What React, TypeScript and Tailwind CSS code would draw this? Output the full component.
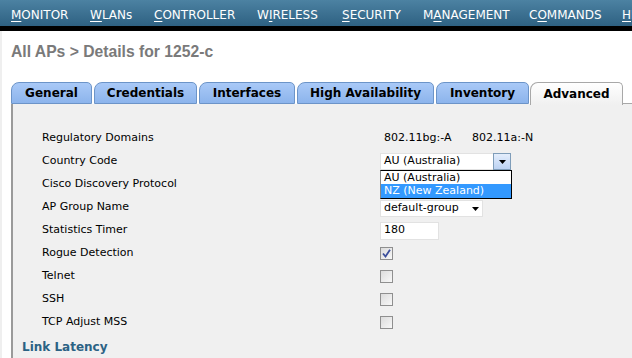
import React from "react";

const navItems = [
  { pre: "", u: "M", post: "ONITOR", w: "w-[79px]" },
  { pre: "", u: "W", post: "LANs", w: "w-[64px]" },
  { pre: "", u: "C", post: "ONTROLLER", w: "w-[103px]" },
  { pre: "W", u: "I", post: "RELESS", w: "w-[85px]", active: true },
  { pre: "", u: "S", post: "ECURITY", w: "w-[81px]" },
  { pre: "M", u: "A", post: "NAGEMENT", w: "w-[106px]" },
  { pre: "C", u: "O", post: "MMANDS", w: "w-[93px]" },
  { pre: "", u: "H", post: "ELP", w: "w-[60px]" },
];

const tabs = [
  { t: "General", w: "w-[81px]" },
  { t: "Credentials", w: "w-[103px]" },
  { t: "Interfaces", w: "w-[96px]" },
  { t: "High Availability", w: "w-[137px]" },
  { t: "Inventory", w: "w-[93px]" },
];

function Checkbox({ checked }: { checked?: boolean }) {
  return (
    <div className="w-[13px] h-[13px] border border-[#8f8f8f] bg-gradient-to-br from-[#dcdcdc] to-[#f8f8f8] flex items-center justify-center">
      {checked && (
        <svg width="9" height="9" viewBox="0 0 9 9">
          <path d="M1 4.5 L3.5 7.5 L8 0.8" stroke="#3c4f9c" strokeWidth="1.8" fill="none" />
        </svg>
      )}
    </div>
  );
}

function Arrow() {
  return (
    <svg width="7" height="4" viewBox="0 0 7 4">
      <path d="M0 0 H7 L3.5 4 Z" fill="#000" />
    </svg>
  );
}

function Row({ label, children }: { label: string; children?: React.ReactNode }) {
  return (
    <div className="flex items-center h-[23px]">
      <div className="w-[367px] pl-[29px]">{label}</div>
      <div className="flex items-center relative">{children}</div>
    </div>
  );
}

export default function App() {
  return (
    <div className="w-[632px] h-[358px] overflow-hidden bg-white" style={{ fontFamily: '"DejaVu Sans", Verdana, sans-serif' }}>
      {/* Nav */}
      <div className="h-[26px] bg-gradient-to-b from-[#4c82a2] to-[#2e6182] flex items-center pl-[1px] text-white text-[12px] whitespace-nowrap overflow-hidden">
        {navItems.map((n) => (
          <div key={n.u + n.post} className={`${n.w} shrink-0 pl-[10px] pt-[4px] h-full flex items-center relative`}>
            <span>
              {n.pre}
              <span className="underline underline-offset-2">{n.u}</span>
              {n.post}
            </span>
            {n.active && <div className="absolute left-0 right-0 top-[26px] h-[5px] bg-[#ff9900]" />}
          </div>
        ))}
      </div>
      <div className="h-[5px] bg-black" />

      <div className="border-l-2 border-[#efefef] h-full">
        <div className="pl-[9px] pt-[9px] h-[51px] text-[15.7px] font-bold text-[#7a7a7a]" style={{ fontFamily: '"Liberation Sans", Arial, sans-serif' }}>
          All APs &gt; Details for 1252-c
        </div>

        {/* Tabs */}
        <div className="flex items-end pl-[9px] h-[22px] gap-[2px] text-[12px] font-bold relative whitespace-nowrap">
          {tabs.map(({ t, w }) => (
            <div
              key={t}
              className={`${w} shrink-0 h-[22px] rounded-tl-[8px] rounded-tr-[5px] border border-[#6c94c8] bg-gradient-to-b from-[#a9c9f7] to-[#8cb4ec] flex items-center justify-center`}
            >
              {t}
            </div>
          ))}
          <div className="w-[93px] shrink-0 h-[23px] -mb-[1px] -ml-[1px] rounded-tl-[8px] rounded-tr-[5px] border border-b-0 border-[#a8a8a8] bg-gradient-to-b from-white to-[#f0f0f0] flex items-center justify-center relative z-10">
            Advanced
          </div>
          <div className="absolute left-[612px] right-0 bottom-0 border-b border-[#a8a8a8]" />
        </div>

        {/* Panel */}
        <div className="ml-[9px] border-l-2 border-[#9a9a9a] bg-[#f0f0f0] text-[11px] text-black pt-[23px] h-[260px]">
          <Row label="Regulatory Domains">
            <span className="pl-[4px] w-[92px]">802.11bg:-A</span>
            <span>802.11a:-N</span>
          </Row>
          <Row label="Country Code">
            <div className="w-[131px] h-[17px] bg-white border border-[#e2e2e2] flex items-center relative">
              <span className="pl-[3px] flex-1">AU (Australia)</span>
              <div className="w-[18px] h-[17px] -mr-[1px] border border-[#7f9db9] bg-gradient-to-b from-[#e4eefc] to-[#bcd2f2] flex items-center justify-center">
                <Arrow />
              </div>
              <div className="absolute left-[-1px] top-[16px] w-[132px] z-20 bg-white border border-black border-l-[#888] leading-[13px]">
                <div className="pl-[3px] h-[13px]">AU (Australia)</div>
                <div className="pl-[3px] h-[14px] bg-[#3399ff] text-white">NZ (New Zealand)</div>
              </div>
            </div>
          </Row>
          <Row label="Cisco Discovery Protocol" />
          <Row label="AP Group Name">
            <div className="w-[103px] h-[17px] bg-white border border-[#e2e2e2] flex items-center mt-[1px]">
              <span className="pl-[3px] flex-1">default-group</span>
              <div className="pr-[3px] pt-[2px]">
                <Arrow />
              </div>
            </div>
          </Row>
          <Row label="Statistics Timer">
            <div className="w-[59px] h-[18px] bg-white border border-[#e2e2e2] flex items-center pl-[3px]">180</div>
          </Row>
          <Row label="Rogue Detection">
            <Checkbox checked />
          </Row>
          <Row label="Telnet">
            <Checkbox />
          </Row>
          <Row label="SSH">
            <Checkbox />
          </Row>
          <Row label="TCP Adjust MSS">
            <Checkbox />
          </Row>
          <div className="pl-[9px] pt-[4px] font-bold text-[#2b6284] text-[12px]">Link Latency</div>
        </div>
      </div>
    </div>
  );
}
